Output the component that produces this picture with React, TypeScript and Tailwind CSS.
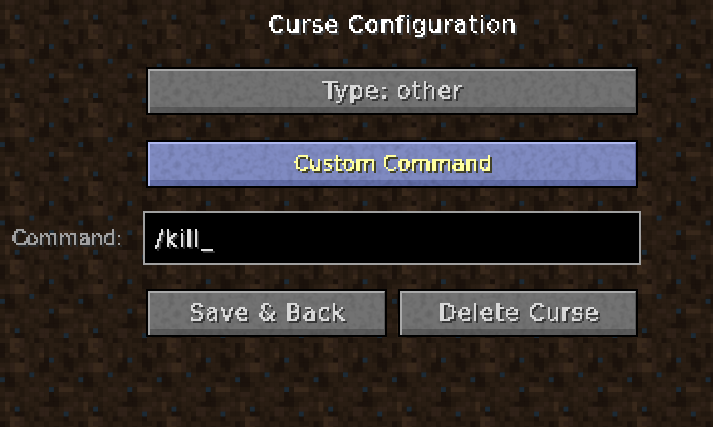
// Minecraft style "Curse Configuration" screen
const CELL = 4.9;
const COLORS: Record<string, string> = {
  "0": "#291d13",
  "1": "#22180f",
  "2": "#2f2118",
  "3": "#1b120c",
  "4": "#38281b",
  b: "#1c2a35",
};

// dirt tile, 16x16, repeats over the whole page
const TILE = [
  "0220100020310001",
  "1001020100331100",
  "0400100013331002",
  "041b101022010220",
  "1003310122100b01",
  "0044210310011300",
  "3142201001000110",
  "3144001021010020",
  "3010201041001302",
  "1100320003b01331",
  "0024421033000331",
  "2024420133100130",
  "131001b010011000",
  "b330010002013301",
  "1331001001002001",
  "0110102200b14440",
];

function DirtBackground() {
  const cols = Math.ceil(713 / CELL);
  const rows = Math.ceil(427 / CELL);
  const rects = [];
  for (let y = 0; y < rows; y++) {
    for (let x = 0; x < cols; x++) {
      rects.push(
        <rect
          key={`${x}-${y}`}
          x={x * CELL}
          y={y * CELL}
          width={CELL + 0.5}
          height={CELL + 0.5}
          fill={COLORS[TILE[y % 16][x % 16]]}
        />,
      );
    }
  }
  return (
    <svg className="absolute inset-0" width={713} height={427}>
      <defs>
        <filter id="noise" x="0" y="0" width="100%" height="100%" colorInterpolationFilters="sRGB">
          <feTurbulence type="fractalNoise" baseFrequency="0.16" numOctaves="2" seed="4" />
          <feColorMatrix values="0 0 0 0 0  0 0 0 0 0  0 0 0 0 0  1.4 0 0 0 -0.6" />
        </filter>
        {/* samples text on a 2px grid so it reads as blocky, then adds the drop shadow */}
        <filter id="pixel" x="-3%" y="-15%" width="106%" height="130%" colorInterpolationFilters="sRGB">
          <feFlood x="0" y="0" width="1" height="1" floodColor="#000" />
          <feComposite width="2" height="2" />
          <feTile result="grid" />
          <feComposite in="SourceGraphic" in2="grid" operator="in" result="dots" />
          <feOffset in="dots" dx="1" result="dotsR" />
          <feMerge result="wide">
            <feMergeNode in="dots" />
            <feMergeNode in="dotsR" />
          </feMerge>
          <feOffset in="wide" dy="1" result="wideD" />
          <feMerge result="blocks">
            <feMergeNode in="wide" />
            <feMergeNode in="wideD" />
          </feMerge>
          <feComponentTransfer in="blocks" result="hard">
            <feFuncA type="discrete" tableValues="0 1 1 1" />
          </feComponentTransfer>
          <feColorMatrix in="hard" values="0.25 0 0 0 0  0 0.25 0 0 0  0 0 0.25 0 0  0 0 0 1 0" result="dark" />
          <feOffset in="dark" dx="2" dy="2" result="shadow" />
          <feMerge>
            <feMergeNode in="shadow" />
            <feMergeNode in="hard" />
          </feMerge>
        </filter>
      </defs>
      {rects}
    </svg>
  );
}

function Noise() {
  return (
    <svg className="absolute inset-0 h-full w-full opacity-20">
      <rect width="100%" height="100%" filter="url(#noise)" />
    </svg>
  );
}

function McButton({ label, active, className }: { label: string; active?: boolean; className?: string }) {
  return (
    <button className={`relative h-[48px] border-2 border-black p-0 ${className ?? ""}`}>
      <span
        className={
          active
            ? "relative flex h-full w-full items-center justify-center border-t-2 border-l-2 border-r border-t-[#aeb8f0] border-l-[#aeb8f0] border-r-[#5a629c] bg-[#7f8ac1] pb-[3px] shadow-[inset_0_-6px_0_#626da6]"
            : "relative flex h-full w-full items-center justify-center border-t-2 border-l-2 border-r border-t-[#a9a9a9] border-l-[#a9a9a9] border-r-[#555555] bg-[#727272] pb-[3px] shadow-[inset_0_-6px_0_#5a5a5a]"
        }
      >
        <Noise />
        <span
          className={
            active
              ? "relative font-['DejaVu_Sans'] text-[21px] leading-none tracking-[0.2px] text-[#ffffa0] [filter:url(#pixel)]"
              : "relative font-['DejaVu_Sans'] text-[23px] leading-none tracking-[1px] text-[#d8d8d8] [filter:url(#pixel)]"
          }
        >
          {label}
        </span>
      </span>
    </button>
  );
}

export default function App() {
  return (
    <div className="relative h-[427px] w-[713px] overflow-hidden bg-[#261b12]">
      <DirtBackground />
      <div className="relative grid grid-cols-[143px_498px] pt-[13px]">
        <div />
        <h1 className="mb-[31px] h-[23px] text-center font-['DejaVu_Sans'] text-[23px] font-normal leading-[23px] tracking-[1px] text-white [filter:url(#pixel)]">
          Curse Configuration
        </h1>

        <div />
        <div className="flex flex-col gap-[25px] px-[3px]">
          <McButton label="Type: other" />
          <McButton label="Custom Command" active />
        </div>

        <label className="mt-[23px] flex h-[54px] items-center pl-[11px] font-['DejaVu_Sans'] text-[21px] leading-none tracking-[-0.5px] text-[#a0a0a0] [filter:url(#pixel)]">
          Command:
        </label>
        <div className="mt-[23px] flex h-[54px] items-center border-2 border-[#a0a0a0] bg-black pl-[10px]">
          <span className="font-['DejaVu_Sans'] text-[23px] leading-none tracking-[1px] text-[#e0e0e0] [filter:url(#pixel)]">
            /kill_
          </span>
        </div>

        <div />
        <div className="mt-[24px] flex gap-[11px] px-[3px]">
          <McButton label="Save &amp; Back" className="w-[241px]" />
          <McButton label="Delete Curse" className="w-[240px]" />
        </div>
      </div>
    </div>
  );
}
